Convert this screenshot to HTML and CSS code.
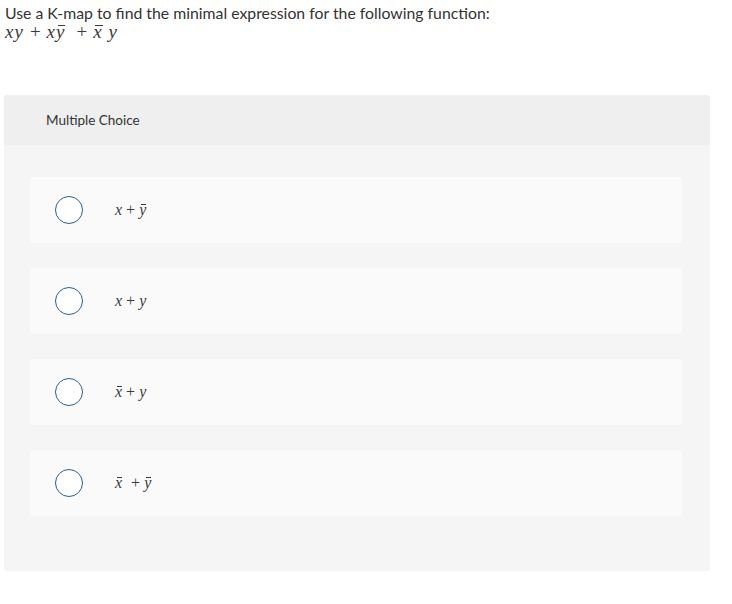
FILE: index.html
```html
<!DOCTYPE html>
<html>
<head>
<meta charset="utf-8">
<link rel="stylesheet" href="styles.css">
</head>
<body>
<div class="question">
  <p class="prompt">Use a K-map to find the minimal expression for the following function:</p>
  <p class="fn"><span class="m">xy</span><span class="op">+</span><span class="m">x<span class="bar">y</span></span><span class="sp"></span><span class="op">+</span><span class="m"><span class="bar">x</span> y</span></p>
</div>
<div class="panel">
  <div class="panel-head">Multiple Choice</div>
  <div class="choices">
    <div class="choice"><span class="radio"></span><span class="expr"><span class="m">x</span><span class="op">+</span><span class="m bar">y</span></span></div>
    <div class="choice"><span class="radio"></span><span class="expr"><span class="m">x</span><span class="op">+</span><span class="m">y</span></span></div>
    <div class="choice"><span class="radio"></span><span class="expr"><span class="m bar">x</span><span class="op">+</span><span class="m">y</span></span></div>
    <div class="choice"><span class="radio"></span><span class="expr"><span class="m bar">x</span><span class="sp"></span><span class="op">+</span><span class="m bar">y</span></span></div>
  </div>
</div>
</body>
</html>
```
FILE: styles.css
```css
html, body { margin: 0; padding: 0; background: #fff; }
body { font-family: "Lato", "Open Sans", sans-serif; color: #333; width: 732px; }
.question { padding: 3px 5px 0 5px; }
.prompt { margin: 0; font-size: 15.8px; line-height: 19px; color: #333; }
.fn { margin: 0; font-family: "Liberation Serif", serif; font-size: 19px; line-height: 20px; color: #3a3a3a; }
.m { font-style: italic; }
.op { margin: 0 6px; }
.fn .m { letter-spacing: 1px; }
.sp { display: inline-block; width: 5px; }
.bar { display: inline-block; position: relative; }
.bar::before { content: ""; position: absolute; left: 2px; right: 0; top: 3px; border-top: 1px solid currentColor; }
.panel { margin: 53px 22px 0 4px; background: #f5f5f5; border-radius: 3px; padding-bottom: 55px; }
.panel-head { background: #efefef; height: 50px; line-height: 50px; padding-left: 42px; font-size: 13.5px; color: #333; border-radius: 3px 3px 0 0; }
.choices { padding: 32px 28px 0 26px; display: flex; flex-direction: column; gap: 25px; }
.choice { background: #fafafa; height: 66px; display: flex; align-items: center; border-radius: 3px; }
.radio { width: 26px; height: 26px; border: 1.5px solid #2d5f8f; border-radius: 50%; background: #fff; margin-left: 25px; }
.expr { margin-left: 32px; font-family: "Liberation Serif", serif; font-size: 16px; color: #3a3a3a; }
.expr .op { margin: 0 4px; }
```
